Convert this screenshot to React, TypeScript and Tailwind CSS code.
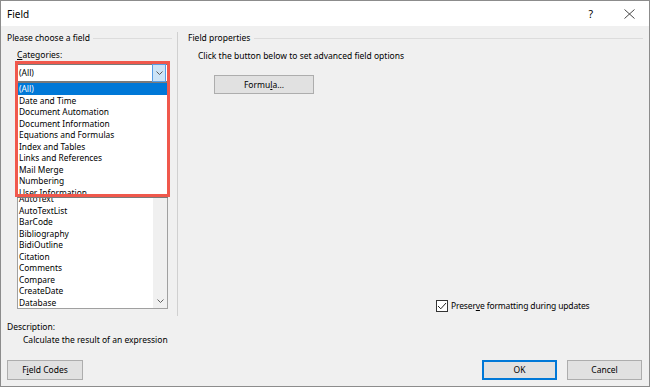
import React from "react";

const dropItems = [
  "(All)",
  "Date and Time",
  "Document Automation",
  "Document Information",
  "Equations and Formulas",
  "Index and Tables",
  "Links and References",
  "Mail Merge",
  "Numbering",
  "User Information",
];

const listItems = [
  "AutoText",
  "AutoTextList",
  "BarCode",
  "Bibliography",
  "BidiOutline",
  "Citation",
  "Comments",
  "Compare",
  "CreateDate",
  "Database",
];

function Chevron({ className }: { className?: string }) {
  return (
    <svg width="7" height="4" viewBox="0 0 7 4" className={className}>
      <path d="M0.5 0.5 L3.5 3.5 L6.5 0.5" fill="none" stroke="currentColor" strokeWidth="1" />
    </svg>
  );
}

export default function App() {
  return (
    <div
      className="w-[650px] h-[387px] border border-[#8c8c8c] bg-[#f0f0f0] flex flex-col text-black text-[8.5px] overflow-hidden"
      style={{ fontFamily: '"Noto Sans", "Segoe UI", sans-serif' }}
    >
      {/* Title bar */}
      <div className="h-[25px] bg-white flex items-center pl-[6px] shrink-0">
        <span className="text-[10px] leading-[12px]">Field</span>
        <div className="flex-1" />
        <span className="text-[10.5px] leading-[12px] mr-[31px]">?</span>
        <svg width="11" height="10" viewBox="0 0 11 10" className="mr-[14px] text-[#333]">
          <path d="M0.5 0.5 L10.5 9.5 M10.5 0.5 L0.5 9.5" stroke="currentColor" strokeWidth="0.9" fill="none" />
        </svg>
      </div>

      {/* Top section */}
      <div className="h-[290px] flex shrink-0">
        {/* Left column */}
        <div className="w-[176px] pt-[6px] flex flex-col">
          <div className="flex items-center h-[12px] pl-[6px] pr-[5px]">
            <span className="leading-[12px] whitespace-nowrap">Please choose a field</span>
            <div className="flex-1 h-px bg-[#dcdcdc] ml-[3px]" />
          </div>
          <div className="mt-[5px] pl-[16px] leading-[12px]">
            <u>C</u>ategories:
          </div>
          <div className="relative ml-[16px] mt-[3px] w-[151px]">
            {/* combo */}
            <div className="h-[18px] bg-white border border-[#7a7a7a] flex items-center">
              <span className="pl-[1px] flex-1 leading-[12px]">(All)</span>
              <div className="w-[14px] h-[18px] -my-px mr-px bg-[#cce4f7] border border-[#569de5] flex items-center justify-center text-[#5a5a5a]">
                <Chevron />
              </div>
            </div>
            {/* listbox */}
            <div className="h-[227px] bg-white border-l border-r border-b border-[#a0a0a0] flex overflow-hidden">
              <div className="flex-1 flex flex-col justify-end overflow-hidden pl-[1px] text-[8.4px]">
                {listItems.map((t) => (
                  <div key={t} className="h-[11.5px] leading-[11.5px] shrink-0 whitespace-nowrap">
                    {t}
                  </div>
                ))}
              </div>
              <div className="w-[14px] bg-[#f0f0f0] flex flex-col justify-end items-center pb-[5px] text-[#606060]">
                <Chevron />
              </div>
            </div>
            {/* dropdown overlay */}
            <div className="absolute left-0 right-0 top-[18px] h-[116px] bg-white border border-[#7a7a7a] overflow-hidden text-[8.4px]">
              {dropItems.map((t, i) => (
                <div
                  key={t}
                  className={
                    i === 0
                      ? "h-[11.5px] leading-[11.5px] pl-px bg-[#0078d7] text-white whitespace-nowrap"
                      : "h-[11.5px] leading-[11.5px] pl-px whitespace-nowrap"
                  }
                >
                  {t}
                </div>
              ))}
            </div>
            {/* highlight annotation */}
            <div className="absolute -left-[2px] -top-[3px] w-[155px] h-[136px] border-[3px] border-[#f0584c] pointer-events-none" />
          </div>
        </div>

        {/* divider */}
        <div className="w-px bg-[#d0d0d0] mt-[6px]" />

        {/* Right column */}
        <div className="flex-1 pt-[6px] pl-[10px] pr-[6px] flex flex-col">
          <div className="flex items-center h-[12px]">
            <span className="leading-[12px] whitespace-nowrap">Field properties</span>
            <div className="flex-1 h-px bg-[#dcdcdc] ml-[4px]" />
          </div>
          <div className="mt-[6px] ml-[10px] leading-[12px] whitespace-nowrap">
            Click the button below to set advanced field options
          </div>
          <div className="mt-[13px] ml-[26px] w-[100px] h-[19px] bg-[#e1e1e1] border border-[#adadad] flex items-center justify-center leading-[12px]">
            <span>
              Formu<u>l</u>a...
            </span>
          </div>
          <div className="flex-1" />
          <div className="flex items-center ml-[248px] mb-[4px] h-[12px]">
            <div className="w-[12px] h-[12px] border border-[#333] bg-white flex items-center justify-center">
              <svg width="10" height="8" viewBox="0 0 10 8">
                <path d="M1 4 L3.8 6.8 L9 1" fill="none" stroke="#222" strokeWidth="1" />
              </svg>
            </div>
            <span className="ml-[3px] leading-[12px] whitespace-nowrap tracking-[-0.15px]">
              Preser<u>v</u>e formatting during updates
            </span>
          </div>
        </div>
      </div>

      {/* Description */}
      <div className="pt-[5px] pl-[6px] leading-[12px]">Description:</div>
      <div className="mt-px pl-[22px] leading-[12px]">Calculate the result of an expression</div>

      {/* Buttons */}
      <div className="mt-[14px] flex pl-[6px] pr-[7px]">
        <div className="w-[76px] h-[20px] bg-[#e1e1e1] border border-[#adadad] flex items-center justify-center leading-[12px]">
          <span>
            F<u>i</u>eld Codes
          </span>
        </div>
        <div className="flex-1" />
        <div className="w-[75px] h-[20px] bg-[#e1e1e1] border-2 border-[#0078d7] flex items-center justify-center leading-[12px]">
          OK
        </div>
        <div className="w-[75px] h-[20px] ml-[10px] bg-[#e1e1e1] border border-[#adadad] flex items-center justify-center leading-[12px]">
          Cancel
        </div>
      </div>
    </div>
  );
}
